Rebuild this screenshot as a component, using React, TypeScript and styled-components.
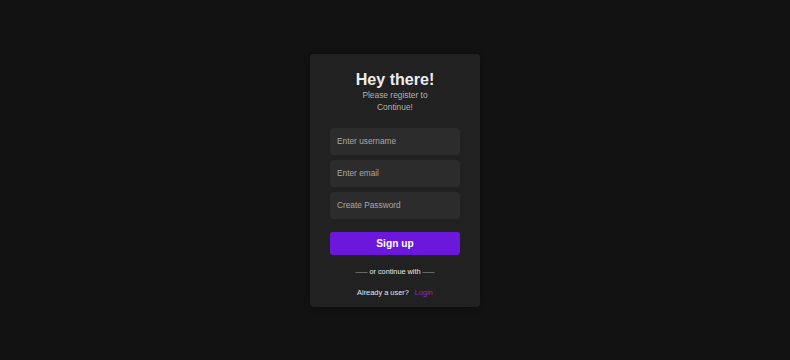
import React from "react";
import styled, { createGlobalStyle } from "styled-components";

const GlobalStyle = createGlobalStyle`
  * {
    box-sizing: border-box;
  }
  body {
    margin: 0;
    background: #121212;
    font-family: "Liberation Sans", Arial, sans-serif;
  }
`;

const Page = styled.div`
  min-height: 100vh;
  display: flex;
  align-items: center;
  justify-content: center;
`;

const Card = styled.div`
  width: 170px;
  padding: 16px 20px 8px;
  background: #212121;
  border-radius: 4px;
  box-shadow: 0 0 6px rgba(0, 0, 0, 0.35);
  display: flex;
  flex-direction: column;
  align-items: stretch;
  text-align: center;
`;

const Title = styled.h1`
  margin: 0;
  font-size: 16.1px;
  line-height: 19px;
  font-weight: 700;
  color: #ededed;
`;

const Subtitle = styled.p`
  margin: 0 auto;
  max-width: 72px;
  font-size: 8.4px;
  line-height: 12px;
  color: #b0b0b0;
`;

const Form = styled.form`
  margin-top: 15px;
  display: flex;
  flex-direction: column;
  gap: 5px;
`;

const Input = styled.input`
  height: 27px;
  width: 100%;
  padding: 0 7px;
  border: none;
  border-radius: 4px;
  outline: none;
  background: #2c2c2c;
  color: #e0e0e0;
  font-family: inherit;
  font-size: 8.3px;

  &::placeholder {
    color: #a8a8a8;
  }
`;

const SubmitButton = styled.button`
  margin-top: 8px;
  height: 23px;
  border: none;
  border-radius: 3px;
  background: #6b18dc;
  color: #ffffff;
  font-family: inherit;
  font-size: 10.2px;
  font-weight: 700;
  cursor: pointer;
`;

const Divider = styled.div`
  margin-top: 11px;
  font-size: 7.3px;
  line-height: 12px;
  color: #e8e8e8;
`;

const DashText = styled.span`
  font-size: 6px;
  color: #d0d0d0;
`;

const Footer = styled.div`
  margin-top: 9px;
  font-size: 7.4px;
  line-height: 12px;
  color: #e8e8e8;
`;

const LoginLink = styled.a`
  margin-left: 6px;
  color: #7a2ee6;
  text-decoration: none;
  cursor: pointer;
`;

const App: React.FC = () => {
  return (
    <Page>
      <GlobalStyle />
      <Card>
        <Title>Hey there!</Title>
        <Subtitle>Please register to Continue!</Subtitle>
        <Form onSubmit={(e) => e.preventDefault()}>
          <Input type="text" placeholder="Enter username" />
          <Input type="email" placeholder="Enter email" />
          <Input type="password" placeholder="Create Password" />
          <SubmitButton type="submit">Sign up</SubmitButton>
        </Form>
        <Divider>
          <DashText>——</DashText> or continue with <DashText>——</DashText>
        </Divider>
        <Footer>
          Already a user?
          <LoginLink>Login</LoginLink>
        </Footer>
      </Card>
    </Page>
  );
};

export default App;
